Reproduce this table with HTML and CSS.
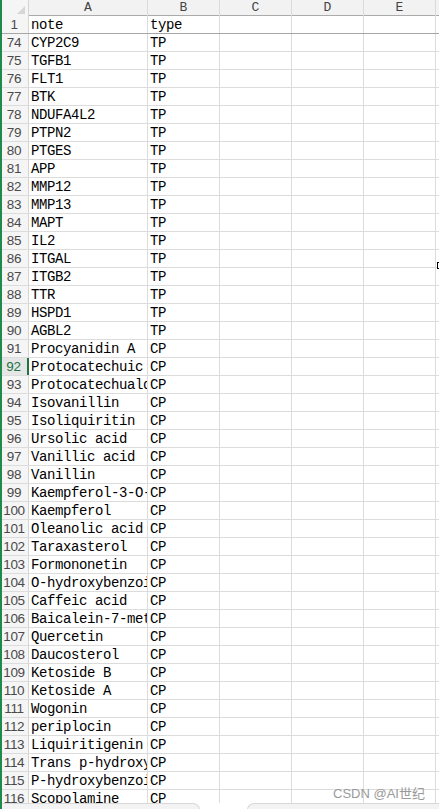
FILE: index.html
```html
<!DOCTYPE html>
<html>
<head>
<meta charset="utf-8">
<link rel="stylesheet" href="styles.css">
</head>
<body>
<div class="sheet">
  <div class="row head">
    <div class="rh corner"><span class="tri"></span></div>
    <div class="ch">A</div><div class="ch">B</div><div class="ch">C</div><div class="ch">D</div><div class="ch">E</div><div class="ch"></div>
  </div>
  <div class="row frozen"><div class="rh">1</div><div class="c">note</div><div class="c">type</div><div class="c"></div><div class="c"></div><div class="c"></div><div class="c"></div></div>
  <div class="row"><div class="rh">74</div><div class="c">CYP2C9</div><div class="c">TP</div><div class="c"></div><div class="c"></div><div class="c"></div><div class="c"></div></div>
  <div class="row"><div class="rh">75</div><div class="c">TGFB1</div><div class="c">TP</div><div class="c"></div><div class="c"></div><div class="c"></div><div class="c"></div></div>
  <div class="row"><div class="rh">76</div><div class="c">FLT1</div><div class="c">TP</div><div class="c"></div><div class="c"></div><div class="c"></div><div class="c"></div></div>
  <div class="row"><div class="rh">77</div><div class="c">BTK</div><div class="c">TP</div><div class="c"></div><div class="c"></div><div class="c"></div><div class="c"></div></div>
  <div class="row"><div class="rh">78</div><div class="c">NDUFA4L2</div><div class="c">TP</div><div class="c"></div><div class="c"></div><div class="c"></div><div class="c"></div></div>
  <div class="row"><div class="rh">79</div><div class="c">PTPN2</div><div class="c">TP</div><div class="c"></div><div class="c"></div><div class="c"></div><div class="c"></div></div>
  <div class="row"><div class="rh">80</div><div class="c">PTGES</div><div class="c">TP</div><div class="c"></div><div class="c"></div><div class="c"></div><div class="c"></div></div>
  <div class="row"><div class="rh">81</div><div class="c">APP</div><div class="c">TP</div><div class="c"></div><div class="c"></div><div class="c"></div><div class="c"></div></div>
  <div class="row"><div class="rh">82</div><div class="c">MMP12</div><div class="c">TP</div><div class="c"></div><div class="c"></div><div class="c"></div><div class="c"></div></div>
  <div class="row"><div class="rh">83</div><div class="c">MMP13</div><div class="c">TP</div><div class="c"></div><div class="c"></div><div class="c"></div><div class="c"></div></div>
  <div class="row"><div class="rh">84</div><div class="c">MAPT</div><div class="c">TP</div><div class="c"></div><div class="c"></div><div class="c"></div><div class="c"></div></div>
  <div class="row"><div class="rh">85</div><div class="c">IL2</div><div class="c">TP</div><div class="c"></div><div class="c"></div><div class="c"></div><div class="c"></div></div>
  <div class="row"><div class="rh">86</div><div class="c">ITGAL</div><div class="c">TP</div><div class="c"></div><div class="c"></div><div class="c"></div><div class="c"></div></div>
  <div class="row"><div class="rh">87</div><div class="c">ITGB2</div><div class="c">TP</div><div class="c"></div><div class="c"></div><div class="c"></div><div class="c"></div></div>
  <div class="row"><div class="rh">88</div><div class="c">TTR</div><div class="c">TP</div><div class="c"></div><div class="c"></div><div class="c"></div><div class="c"></div></div>
  <div class="row"><div class="rh">89</div><div class="c">HSPD1</div><div class="c">TP</div><div class="c"></div><div class="c"></div><div class="c"></div><div class="c"></div></div>
  <div class="row"><div class="rh">90</div><div class="c">AGBL2</div><div class="c">TP</div><div class="c"></div><div class="c"></div><div class="c"></div><div class="c"></div></div>
  <div class="row"><div class="rh">91</div><div class="c">Procyanidin A</div><div class="c">CP</div><div class="c"></div><div class="c"></div><div class="c"></div><div class="c"></div></div>
  <div class="row active"><div class="rh">92</div><div class="c">Protocatechuic acid</div><div class="c">CP</div><div class="c"></div><div class="c"></div><div class="c"></div><div class="c"></div></div>
  <div class="row"><div class="rh">93</div><div class="c">Protocatechualdehyde</div><div class="c">CP</div><div class="c"></div><div class="c"></div><div class="c"></div><div class="c"></div></div>
  <div class="row"><div class="rh">94</div><div class="c">Isovanillin</div><div class="c">CP</div><div class="c"></div><div class="c"></div><div class="c"></div><div class="c"></div></div>
  <div class="row"><div class="rh">95</div><div class="c">Isoliquiritin</div><div class="c">CP</div><div class="c"></div><div class="c"></div><div class="c"></div><div class="c"></div></div>
  <div class="row"><div class="rh">96</div><div class="c">Ursolic acid</div><div class="c">CP</div><div class="c"></div><div class="c"></div><div class="c"></div><div class="c"></div></div>
  <div class="row"><div class="rh">97</div><div class="c">Vanillic acid</div><div class="c">CP</div><div class="c"></div><div class="c"></div><div class="c"></div><div class="c"></div></div>
  <div class="row"><div class="rh">98</div><div class="c">Vanillin</div><div class="c">CP</div><div class="c"></div><div class="c"></div><div class="c"></div><div class="c"></div></div>
  <div class="row"><div class="rh">99</div><div class="c">Kaempferol-3-O-rutinoside</div><div class="c">CP</div><div class="c"></div><div class="c"></div><div class="c"></div><div class="c"></div></div>
  <div class="row"><div class="rh">100</div><div class="c">Kaempferol</div><div class="c">CP</div><div class="c"></div><div class="c"></div><div class="c"></div><div class="c"></div></div>
  <div class="row"><div class="rh">101</div><div class="c">Oleanolic acid</div><div class="c">CP</div><div class="c"></div><div class="c"></div><div class="c"></div><div class="c"></div></div>
  <div class="row"><div class="rh">102</div><div class="c">Taraxasterol</div><div class="c">CP</div><div class="c"></div><div class="c"></div><div class="c"></div><div class="c"></div></div>
  <div class="row"><div class="rh">103</div><div class="c">Formononetin</div><div class="c">CP</div><div class="c"></div><div class="c"></div><div class="c"></div><div class="c"></div></div>
  <div class="row"><div class="rh">104</div><div class="c">O-hydroxybenzoic acid</div><div class="c">CP</div><div class="c"></div><div class="c"></div><div class="c"></div><div class="c"></div></div>
  <div class="row"><div class="rh">105</div><div class="c">Caffeic acid</div><div class="c">CP</div><div class="c"></div><div class="c"></div><div class="c"></div><div class="c"></div></div>
  <div class="row"><div class="rh">106</div><div class="c">Baicalein-7-methyl ether</div><div class="c">CP</div><div class="c"></div><div class="c"></div><div class="c"></div><div class="c"></div></div>
  <div class="row"><div class="rh">107</div><div class="c">Quercetin</div><div class="c">CP</div><div class="c"></div><div class="c"></div><div class="c"></div><div class="c"></div></div>
  <div class="row"><div class="rh">108</div><div class="c">Daucosterol</div><div class="c">CP</div><div class="c"></div><div class="c"></div><div class="c"></div><div class="c"></div></div>
  <div class="row"><div class="rh">109</div><div class="c">Ketoside B</div><div class="c">CP</div><div class="c"></div><div class="c"></div><div class="c"></div><div class="c"></div></div>
  <div class="row"><div class="rh">110</div><div class="c">Ketoside A</div><div class="c">CP</div><div class="c"></div><div class="c"></div><div class="c"></div><div class="c"></div></div>
  <div class="row"><div class="rh">111</div><div class="c">Wogonin</div><div class="c">CP</div><div class="c"></div><div class="c"></div><div class="c"></div><div class="c"></div></div>
  <div class="row"><div class="rh">112</div><div class="c">periplocin</div><div class="c">CP</div><div class="c"></div><div class="c"></div><div class="c"></div><div class="c"></div></div>
  <div class="row"><div class="rh">113</div><div class="c">Liquiritigenin</div><div class="c">CP</div><div class="c"></div><div class="c"></div><div class="c"></div><div class="c"></div></div>
  <div class="row"><div class="rh">114</div><div class="c">Trans p-hydroxycinnamic acid</div><div class="c">CP</div><div class="c"></div><div class="c"></div><div class="c"></div><div class="c"></div></div>
  <div class="row"><div class="rh">115</div><div class="c">P-hydroxybenzoic acid</div><div class="c">CP</div><div class="c"></div><div class="c"></div><div class="c"></div><div class="c"></div></div>
  <div class="row"><div class="rh">116</div><div class="c">Scopolamine</div><div class="c">CP</div><div class="c"></div><div class="c"></div><div class="c"></div><div class="c"></div></div>
  <span class="cursor"></span>
  <div class="watermark">CSDN @AI世纪</div>
</div>
<div class="tabs">
  <div class="tab left"></div>
  <div class="tab right"></div>
</div>
</body>
</html>
```
FILE: styles.css
```css
html, body {
  margin: 0;
  padding: 0;
  background: #fff;
}
body {
  width: 439px;
  height: 809px;
  overflow: hidden;
  position: relative;
}
body::before {
  content: "";
  position: absolute;
  left: 0;
  top: 0;
  width: 2px;
  height: 809px;
  background: #1f8a4c;
  z-index: 5;
}
.sheet {
  height: 803px;
  overflow: hidden;
  position: relative;
}
.row {
  display: grid;
  grid-template-columns: 29px 119px 72px 72px 72px 72px 10px;
  height: 18px;
  box-sizing: border-box;
  border-bottom: 1px solid #dcdcdc;
}
.row.head {
  height: 16px;
  background: #f2f2f2;
  border-bottom: 1px solid #ababab;
}
.row.frozen {
  border-bottom: 1px solid #a6a6a6;
}
.rh {
  background: #f5f5f5;
  border-right: 1px solid #d4d4d4;
  font-family: "Liberation Sans", Arial, sans-serif;
  font-size: 13.5px;
  color: #4a4a4a;
  text-align: center;
  line-height: 17px;
  white-space: nowrap;
  overflow: hidden;
  letter-spacing: -0.3px;
}
.corner {
  position: relative;
}
.tri {
  position: absolute;
  right: 3px;
  bottom: 2px;
  width: 0;
  height: 0;
  border-left: 8px solid transparent;
  border-bottom: 8px solid #d6d6d6;
}
.ch {
  border-right: 1px solid #dadada;
  font-family: "Liberation Mono", "Courier New", monospace;
  font-size: 13px;
  color: #444;
  text-align: center;
  line-height: 16px;
}
.c {
  border-right: 1px solid #dcdcdc;
  font-family: "Liberation Mono", "Courier New", monospace;
  font-size: 14px;
  letter-spacing: -0.4px;
  color: #000;
  padding-left: 2px;
  line-height: 18px;
  white-space: nowrap;
  overflow: hidden;
}
.row.active .rh {
  background: #e6e6e6;
  color: #217346;
  border-right: 2px solid #217346;
}
.cursor {
  position: absolute;
  left: 437px;
  top: 262px;
  width: 2px;
  height: 5px;
  border: 1px solid #000;
  border-right: none;
  background: #fff;
}
.watermark {
  position: absolute;
  left: 333px;
  top: 783px;
  font-family: "Liberation Sans", Arial, "Noto Sans CJK SC", sans-serif;
  font-size: 13px;
  color: #9a9a9a;
  white-space: nowrap;
}
.tabs {
  display: flex;
  height: 6px;
  overflow: hidden;
}
.tab {
  height: 20px;
  background: #f3f3f3;
  border: 1px solid #d8d8d8;
  box-sizing: border-box;
}
.tab.left {
  width: 200px;
  border-left: none;
  border-top-right-radius: 7px;
}
.tab.right {
  margin-left: 47px;
  flex: 1;
  border-right: none;
  border-top-left-radius: 7px;
}
```
